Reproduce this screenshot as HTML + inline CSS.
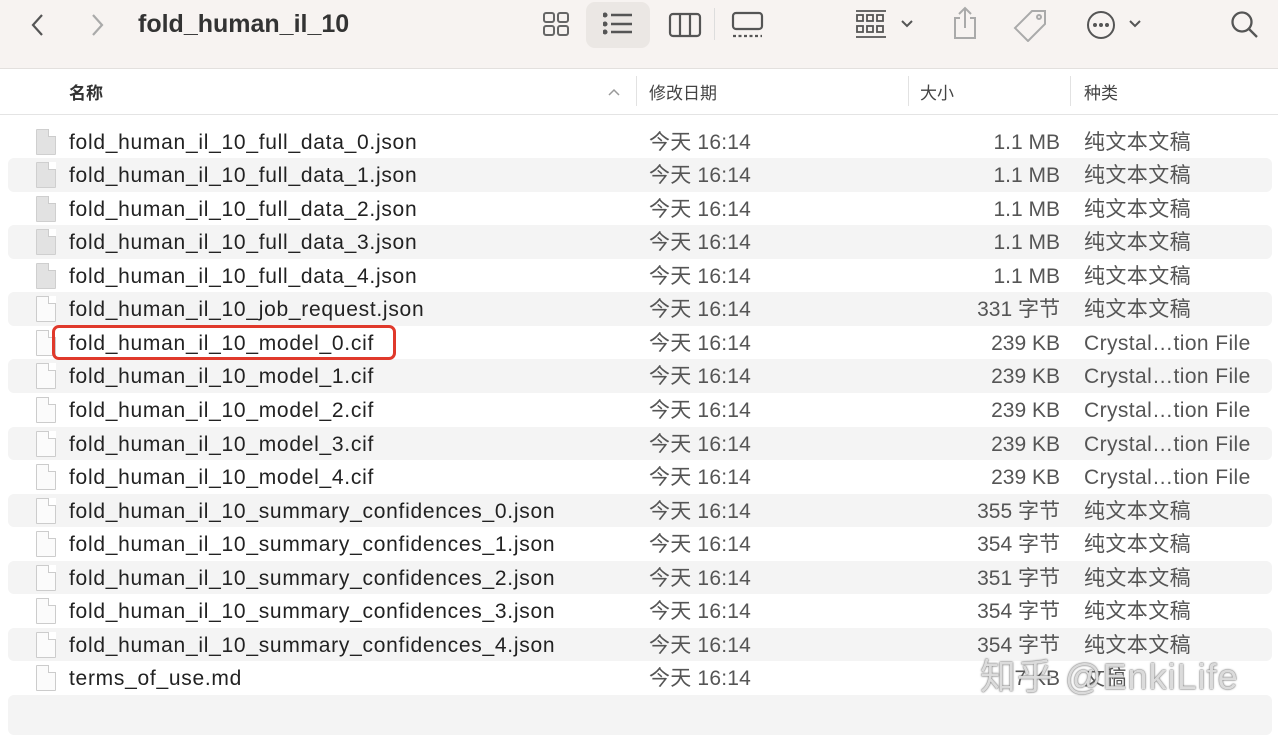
<!DOCTYPE html>
<html><head><meta charset="utf-8"><style>
*{margin:0;padding:0;box-sizing:border-box}
body{width:1278px;height:720px;overflow:hidden;background:#fff;font-family:"Liberation Sans","Noto Sans CJK SC",sans-serif;position:relative;color:#262626}
.tb{position:absolute;left:0;top:0;width:1278px;height:69px;background:#f7f3f1;border-bottom:1px solid #e3e0de}
.hd{position:absolute;left:0;top:70px;width:1278px;height:45px;background:#fff;border-bottom:1px solid #e4e4e4;font-size:17px;color:#444}
.hd span{position:absolute;top:9px}
.sep{position:absolute;top:6px;width:1px;height:30px;background:#e2e2e2}
.row{position:absolute;left:8px;width:1264px;height:33.56px;font-size:21px;line-height:35px}
.row.g{background:#f4f4f4;border-radius:6px}
.row span{position:absolute;top:0;white-space:nowrap}
.n{left:61px;color:#222;letter-spacing:0.72px}.d{left:641px;color:#555;letter-spacing:0.2px}.s{right:212px;color:#555;text-align:right}.k{left:1076px;color:#555;letter-spacing:0.4px}
.ic{position:absolute;left:28px;top:4px;width:20px;height:26px;background:#fbfbfb;border:1px solid #ccc;border-radius:1px}
.ic.j{background:#e2e2e2;border-color:#cfcfcf}
.ic:after{content:"";position:absolute;right:-1px;top:-1px;width:7px;height:7px;background:#fff;border-left:1px solid #ccc;border-bottom:1px solid #ccc}
svg{position:absolute}
</style></head><body>
<div class="tb">
<svg style="left:28px;top:12px" width="20" height="26"><path d="M14 3 L5 13 L14 23" stroke="#555" stroke-width="2.2" fill="none"/></svg>
<svg style="left:88px;top:12px" width="20" height="26"><path d="M5 3 L14 13 L5 23" stroke="#aaa" stroke-width="2.2" fill="none"/></svg>
<div style="position:absolute;left:138px;top:10px;font-size:25px;font-weight:bold;color:#333">fold_human_il_10</div>
<svg style="left:543px;top:11px" width="28" height="28" fill="none" stroke="#666" stroke-width="2"><rect x="1" y="2" width="10" height="9" rx="2"/><rect x="15" y="2" width="10" height="9" rx="2"/><rect x="1" y="15" width="10" height="9" rx="2"/><rect x="15" y="15" width="10" height="9" rx="2"/></svg>
<div style="position:absolute;left:586px;top:2px;width:64px;height:46px;background:#ebe7e4;border-radius:9px"></div>
<svg style="left:603px;top:12px" width="32" height="24" stroke="#555" stroke-width="2.5"><circle cx="2" cy="3" r="1.3"/><circle cx="2" cy="12" r="1.3"/><circle cx="2" cy="20" r="1.3"/><path d="M8 3H29M8 12H29M8 20H29"/></svg>
<svg style="left:668px;top:12px" width="36" height="26" fill="none" stroke="#555" stroke-width="2.2"><rect x="2" y="2" width="30" height="22" rx="3"/><path d="M12 2V24M22 2V24"/></svg>
<div style="position:absolute;left:714px;top:8px;width:1px;height:32px;background:#ddd"></div>
<svg style="left:731px;top:11px" width="34" height="28" fill="none" stroke="#555" stroke-width="2.2"><rect x="2" y="2" width="29" height="16" rx="3"/><path d="M2 25H31" stroke-dasharray="3 2.5"/></svg>
<svg style="left:856px;top:9px" width="32" height="30" fill="none" stroke="#555" stroke-width="1.8"><path d="M0 2H30M0 28H30"/><rect x="1" y="6" width="6" height="6"/><rect x="11" y="6" width="6" height="6"/><rect x="21" y="6" width="6" height="6"/><rect x="1" y="17" width="6" height="6"/><rect x="11" y="17" width="6" height="6"/><rect x="21" y="17" width="6" height="6"/></svg>
<svg style="left:900px;top:18px" width="14" height="12"><path d="M2 3L7 8L12 3" stroke="#555" stroke-width="2" fill="none"/></svg>
<svg style="left:952px;top:6px" width="26" height="34" fill="none" stroke="#aaa" stroke-width="2"><path d="M8 12H3V32H23V12H18M13 22V2M7 8L13 2L19 8"/></svg>
<svg style="left:1012px;top:8px" width="36" height="34" fill="none" stroke="#aaa" stroke-width="2"><path d="M20 3H33V16L16 33L3 20Z"/><circle cx="27" cy="9" r="2"/></svg>
<svg style="left:1086px;top:10px" width="30" height="30" fill="none" stroke="#555" stroke-width="2"><circle cx="15" cy="15" r="13"/><circle cx="9" cy="15" r="1" fill="#555"/><circle cx="15" cy="15" r="1" fill="#555"/><circle cx="21" cy="15" r="1" fill="#555"/></svg>
<svg style="left:1128px;top:18px" width="14" height="12"><path d="M2 3L7 8L12 3" stroke="#555" stroke-width="2" fill="none"/></svg>
<svg style="left:1230px;top:10px" width="30" height="30" fill="none" stroke="#555" stroke-width="2.3"><circle cx="12" cy="12" r="9.5"/><path d="M19 19L27 27"/></svg>
</div>
<div class="hd">
<span style="left:69px;font-weight:bold;color:#333">名称</span>
<svg style="left:607px;top:17px" width="14" height="10"><path d="M2 8L7 3L12 8" stroke="#999" stroke-width="1.5" fill="none"/></svg>
<div class="sep" style="left:636px"></div>
<span style="left:649px">修改日期</span>
<div class="sep" style="left:908px"></div>
<span style="left:920px">大小</span>
<div class="sep" style="left:1070px"></div>
<span style="left:1084px">种类</span>
</div>
<div id="rows"></div>
<div class="row g" style="top:695px;height:40px"></div>
<div style="position:absolute;left:52px;top:325px;width:344px;height:35px;border:3px solid #e0392b;border-radius:7px"></div>
<div style="position:absolute;left:980px;top:648px;font-size:36px;letter-spacing:1px;color:rgba(255,255,255,.75);text-shadow:0 0 2px #777,0 0 1px #555;white-space:nowrap">知乎 @EnkiLife</div>
<script>
var f=[["fold_human_il_10_full_data_0.json","1.1 MB","纯文本文稿",1],["fold_human_il_10_full_data_1.json","1.1 MB","纯文本文稿",1],["fold_human_il_10_full_data_2.json","1.1 MB","纯文本文稿",1],["fold_human_il_10_full_data_3.json","1.1 MB","纯文本文稿",1],["fold_human_il_10_full_data_4.json","1.1 MB","纯文本文稿",1],["fold_human_il_10_job_request.json","331 字节","纯文本文稿",0],["fold_human_il_10_model_0.cif","239 KB","Crystal…tion File",0],["fold_human_il_10_model_1.cif","239 KB","Crystal…tion File",0],["fold_human_il_10_model_2.cif","239 KB","Crystal…tion File",0],["fold_human_il_10_model_3.cif","239 KB","Crystal…tion File",0],["fold_human_il_10_model_4.cif","239 KB","Crystal…tion File",0],["fold_human_il_10_summary_confidences_0.json","355 字节","纯文本文稿",0],["fold_human_il_10_summary_confidences_1.json","354 字节","纯文本文稿",0],["fold_human_il_10_summary_confidences_2.json","351 字节","纯文本文稿",0],["fold_human_il_10_summary_confidences_3.json","354 字节","纯文本文稿",0],["fold_human_il_10_summary_confidences_4.json","354 字节","纯文本文稿",0],["terms_of_use.md","7 KB","文稿",0]];
var h="";f.forEach(function(r,i){h+='<div class="row'+(i%2?' g':'')+'" style="top:'+(124.5+i*33.56)+'px"><div class="ic'+(r[3]?' j':'')+'"></div><span class="n">'+r[0]+'</span><span class="d">今天 16:14</span><span class="s">'+r[1]+'</span><span class="k">'+r[2]+'</span></div>';});
document.getElementById("rows").innerHTML=h;
</script>
</body></html>
